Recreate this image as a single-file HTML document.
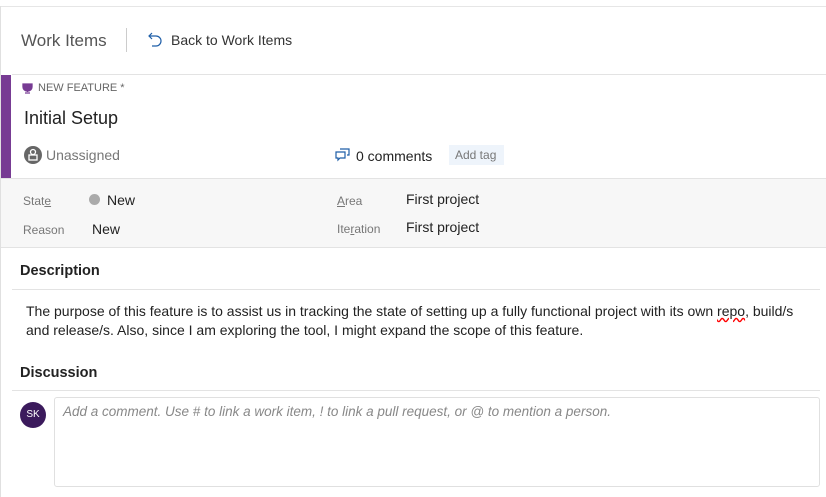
<!DOCTYPE html>
<html><head><style>
*{margin:0;padding:0;box-sizing:border-box}
body{width:826px;height:497px;background:#fff;font-family:"Liberation Sans",sans-serif;position:relative;overflow:hidden;color:#222}
.a{position:absolute;white-space:nowrap}
</style></head><body>
<div class="a" style="left:0;top:6px;width:826px;height:1px;background:#e6e6e6"></div>
<div class="a" style="left:0;top:6px;width:1px;height:491px;background:#e0e0e0"></div>
<div class="a" style="left:21px;top:31px;font-size:17px;color:#555">Work Items</div>
<div class="a" style="left:126px;top:28px;width:1px;height:24px;background:#ccc"></div>
<svg class="a" style="left:147px;top:31px" width="16" height="18" viewBox="0 0 16 18"><path d="M5 2 L2 5 L5 8 M2 5 H9 A5 5 0 0 1 9 15 H5" fill="none" stroke="#1e5ea8" stroke-width="1.2"/></svg>
<div class="a" style="left:171px;top:32px;font-size:14px;color:#333">Back to Work Items</div>
<div class="a" style="left:12px;top:74px;width:814px;height:1px;background:#e3e3e3"></div>
<div class="a" style="left:1px;top:75px;width:10px;height:103px;background:#773b93"></div>
<svg class="a" style="left:22px;top:83px" width="11" height="11" viewBox="0 0 11 11"><path d="M1 1H10V4A4.5 4 0 0 1 1 4Z M5.5 7V9 M3 10H8" fill="#773b93" stroke="#773b93" stroke-width="1.3"/></svg>
<div class="a" style="left:38px;top:82px;font-size:11px;color:#666">NEW FEATURE *</div>
<div class="a" style="left:24px;top:108px;font-size:18px;color:#222">Initial Setup</div>
<svg class="a" style="left:24px;top:146px" width="18" height="18" viewBox="0 0 18 18"><circle cx="9" cy="9" r="9" fill="#666"/><circle cx="9" cy="6" r="2.5" fill="none" stroke="#fff" stroke-width="1.3"/><rect x="5" y="9" width="8" height="5" fill="none" stroke="#fff" stroke-width="1.3"/></svg>
<div class="a" style="left:46px;top:147px;font-size:14px;color:#777">Unassigned</div>
<svg class="a" style="left:335px;top:148px" width="15" height="14" viewBox="0 0 15 14"><path d="M5 1H14V7H12 M1 4H10V10H5L3 12V10H1Z" fill="none" stroke="#1e5ea8" stroke-width="1.2"/></svg>
<div class="a" style="left:356px;top:148px;font-size:14px;color:#222">0 comments</div>
<div class="a" style="left:449px;top:145px;width:55px;height:20px;background:#eef4fb;font-size:12px;color:#777;padding:3px 0 0 6px">Add tag</div>
<div class="a" style="left:1px;top:178px;width:825px;height:70px;background:#f7f7f7;border-top:1px solid #e3e3e3;border-bottom:1px solid #e3e3e3"></div>
<div class="a" style="left:23px;top:194px;font-size:12px;color:#777">Stat<u>e</u></div>
<div class="a" style="left:89px;top:194px;width:11px;height:11px;border-radius:50%;background:#aaa"></div>
<div class="a" style="left:107px;top:192px;font-size:14px;color:#222">New</div>
<div class="a" style="left:23px;top:223px;font-size:12px;color:#777">Reason</div>
<div class="a" style="left:92px;top:221px;font-size:14px;color:#222">New</div>
<div class="a" style="left:337px;top:194px;font-size:12px;color:#777"><u>A</u>rea</div>
<div class="a" style="left:406px;top:191px;font-size:14px;color:#222">First project</div>
<div class="a" style="left:337px;top:222px;font-size:12px;color:#777">Ite<u>r</u>ation</div>
<div class="a" style="left:406px;top:219px;font-size:14px;color:#222">First project</div>
<div class="a" style="left:20px;top:263px;font-size:14.5px;font-weight:600;color:#222">Description</div>
<div class="a" style="left:12px;top:289px;width:808px;height:1px;background:#e3e3e3"></div>
<div class="a" style="left:26px;top:302px;font-size:14px;color:#222;line-height:19px">The purpose of this feature is to assist us in tracking the state of setting up a fully functional project with its own <span style="text-decoration:underline wavy red">repo</span>, build/s<br>and release/s. Also, since I am exploring the tool, I might expand the scope of this feature.</div>
<div class="a" style="left:20px;top:365px;font-size:14.5px;font-weight:600;color:#222">Discussion</div>
<div class="a" style="left:12px;top:390px;width:808px;height:1px;background:#e3e3e3"></div>
<div class="a" style="left:20px;top:402px;width:26px;height:26px;border-radius:50%;background:#3b1a5c;color:#fff;font-size:10px;text-align:center;line-height:26px">SK</div>
<div class="a" style="left:54px;top:397px;width:766px;height:90px;border:1px solid #e0e0e0;border-radius:3px"></div>
<div class="a" style="left:63px;top:404px;font-size:13.5px;font-style:italic;color:#888">Add a comment. Use # to link a work item, ! to link a pull request, or @ to mention a person.</div>
</body></html>
